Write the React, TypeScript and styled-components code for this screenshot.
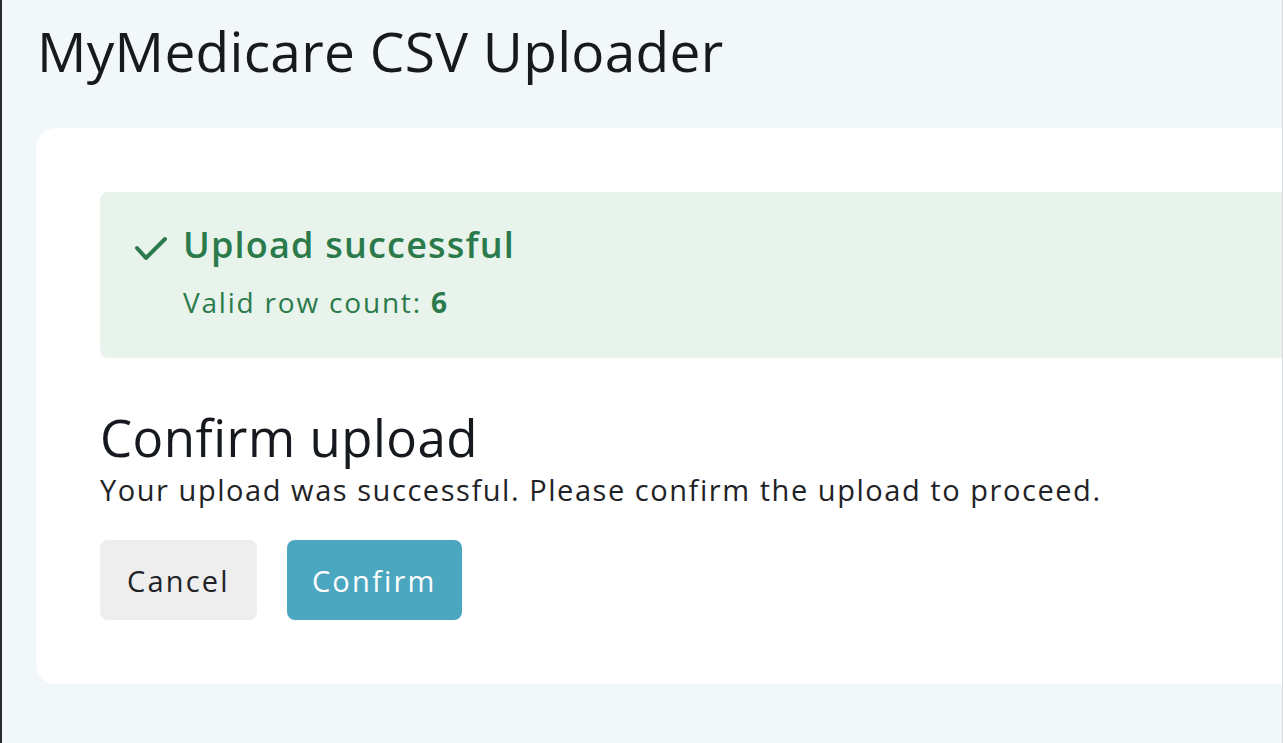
import React from "react";
import styled, { createGlobalStyle } from "styled-components";

const GlobalStyle = createGlobalStyle`
  html, body { margin: 0; padding: 0; }
  body {
    font-family: "Open Sans", "Noto Sans", Arial, sans-serif;
    background: #f2f7fa;
    overflow: hidden;
  }
  * { box-sizing: border-box; }
`;

const Page = styled.div`
  min-height: 743px;
  background: #f2f7fa;
  border-left: 2px solid #2b2b2b;
  border-right: 1px solid #d6dadd;
  padding: 19px 0 60px 34px;
  overflow: hidden;
`;

const Title = styled.h1`
  margin: 0 0 45px 1px;
  font-size: 55px;
  line-height: 64px;
  font-weight: 400;
  color: #16191d;
  letter-spacing: 0.3px;
`;

const Card = styled.section`
  background: #ffffff;
  border-radius: 20px;
  margin-right: -120px;
  padding: 64px;
`;

const Alert = styled.div`
  background: #e8f3ec;
  border-radius: 8px;
  padding: 30px 34px 38px 35px;
  color: #2b7a4b;
`;

const AlertHeading = styled.div`
  display: flex;
  align-items: flex-start;
  gap: 16px;
  font-size: 36px;
  line-height: 46px;
  font-weight: 600;
  letter-spacing: 1.2px;
`;

const CheckSvg = styled.svg`
  flex: none;
  margin-top: 14px;
`;

const AlertBody = styled.p`
  margin: 16px 0 0 48px;
  font-size: 28px;
  line-height: 36px;
  letter-spacing: 1.8px;
  strong { font-weight: 700; }
`;

const Heading = styled.h2`
  margin: 47px 0 0 0;
  font-size: 51px;
  line-height: 64px;
  font-weight: 500;
  letter-spacing: 0.5px;
  color: #16191d;
`;

const Text = styled.p`
  margin: 1px 0 0 0;
  font-size: 29px;
  line-height: 40px;
  letter-spacing: 1.55px;
  color: #1f2327;
`;

const Actions = styled.div`
  display: flex;
  gap: 30px;
  margin-top: 30px;
`;

const Button = styled.button<{ $primary?: boolean }>`
  font-family: inherit;
  height: 80px;
  padding: 0 ${(p) => (p.$primary ? "25px" : "27px")};
  border: none;
  border-radius: 8px;
  font-size: 29px;
  font-weight: 400;
  letter-spacing: 2.2px;
  cursor: pointer;
  background: ${(p) => (p.$primary ? "#4ba6c0" : "#eeeeee")};
  color: ${(p) => (p.$primary ? "#ffffff" : "#1f2327")};
`;

const CheckIcon = () => (
  <CheckSvg width="32" height="26" viewBox="0 0 32 26" fill="none">
    <polyline
      points="2,12 11,22 30,3"
      stroke="#2b7a4b"
      strokeWidth="4"
      strokeLinecap="round"
      strokeLinejoin="round"
    />
  </CheckSvg>
);

export default function App() {
  return (
    <>
      <GlobalStyle />
      <Page>
        <Title>MyMedicare CSV Uploader</Title>
        <Card>
          <Alert>
            <AlertHeading>
              <CheckIcon />
              <span>Upload successful</span>
            </AlertHeading>
            <AlertBody>
              Valid row count: <strong>6</strong>
            </AlertBody>
          </Alert>
          <Heading>Confirm upload</Heading>
          <Text>Your upload was successful. Please confirm the upload to proceed.</Text>
          <Actions>
            <Button>Cancel</Button>
            <Button $primary>Confirm</Button>
          </Actions>
        </Card>
      </Page>
    </>
  );
}
